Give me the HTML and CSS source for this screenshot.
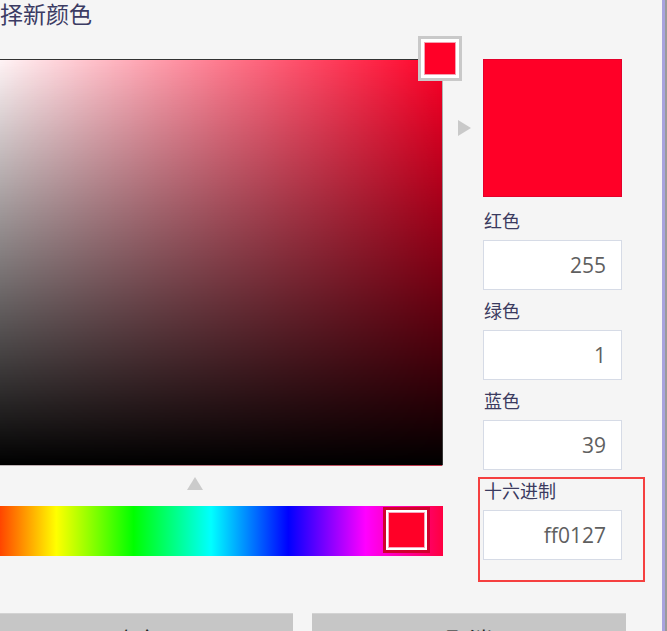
FILE: index.html
```html
<!DOCTYPE html>
<html lang="zh-CN">
<head>
<meta charset="utf-8">
<title>选择新颜色</title>
<link rel="stylesheet" href="styles.css">
</head>
<body>
<div class="dialog">
  <h1 class="title">选择新颜色</h1>
  <div class="main">
    <div class="picker">
      <div class="sv">
        <div class="sv-handle"></div>
      </div>
      <div class="up-arrow"></div>
      <div class="hue">
        <div class="hue-handle"></div>
      </div>
    </div>
    <div class="pointer-col">
      <div class="right-arrow"></div>
    </div>
    <div class="fields">
      <div class="preview"></div>
      <label class="label">红色</label>
      <div class="input">255</div>
      <label class="label">绿色</label>
      <div class="input">1</div>
      <label class="label">蓝色</label>
      <div class="input">39</div>
      <label class="label">十六进制</label>
      <div class="input">ff0127</div>
    </div>
  </div>
  <div class="buttons">
    <div class="btn">确定</div>
    <div class="btn">取消</div>
  </div>
  <div class="highlight"></div>
</div>
</body>
</html>
```

FILE: styles.css
```css
html, body {
  margin: 0;
  padding: 0;
  background: #9a9a9a;
  width: 667px;
  height: 631px;
  overflow: hidden;
}

.dialog {
  position: relative;
  width: 662px;
  height: 631px;
  border-right: 3px solid #a9a3de;
  background: #f5f5f5;
  overflow: hidden;
  font-family: "Noto Sans CJK SC", "Noto Sans", sans-serif;
}

.title {
  margin: 0 0 0 -23px;
  font-size: 23px;
  font-weight: normal;
  line-height: 26px;
  color: #3b3b63;
  white-space: nowrap;
}

.main {
  display: flex;
  align-items: flex-start;
  margin-top: 33px;
}

.picker {
  margin-left: -21px;
  width: 464px;
  display: flex;
  flex-direction: column;
}

.sv {
  position: relative;
  height: 405px;
  border: 1px solid rgba(110, 110, 110, 0.45);
  border-left: none;
  background:
    linear-gradient(to top, #000 0%, rgba(0, 0, 0, 0) 100%),
    linear-gradient(to right, #fff 0%, rgba(255, 255, 255, 0) 100%),
    #ff0027;
}

.sv-handle {
  position: absolute;
  top: -24px;
  right: -20px;
  width: 38px;
  height: 39px;
  border: 3px solid #c9c9c9;
  box-shadow: inset 0 0 0 3px #fff, inset 0 0 0 4px #f4a0b0;
  background: #ff0027;
}

.up-arrow {
  margin: 11px 0 0 208px;
  width: 0;
  height: 0;
  border-left: 8px solid transparent;
  border-right: 8px solid transparent;
  border-bottom: 13px solid #cbcbcb;
}

.hue {
  position: relative;
  margin-top: 16px;
  height: 50px;
  background: linear-gradient(to right,
    #ff0000 0%, #ffff00 16.667%, #00ff00 33.333%, #00ffff 50%,
    #0000ff 66.667%, #ff00ff 83.333%, #ff0040 100%);
}

.hue-handle {
  position: absolute;
  top: 1px;
  left: 404px;
  width: 41px;
  height: 40px;
  border: 3px solid rgba(120, 0, 60, 0.35);
  box-shadow: inset 0 0 0 2px #fff, inset 0 0 0 3px #f7a6bd;
  background: #ff0027;
}

.pointer-col {
  width: 40px;
  padding-top: 61px;
}

.right-arrow {
  margin-left: 15px;
  width: 0;
  height: 0;
  border-top: 8px solid transparent;
  border-bottom: 8px solid transparent;
  border-left: 13px solid #c9c9c9;
}

.fields {
  width: 139px;
  display: flex;
  flex-direction: column;
}

.preview {
  height: 136px;
  border: 1px solid #e3002a;
  background: #ff0027;
  margin-bottom: 3px;
}

.label {
  display: block;
  height: 40px;
  line-height: 40px;
  font-size: 18px;
  color: #3b3b5f;
  white-space: nowrap;
  padding-left: 1px;
}

.input {
  box-sizing: border-box;
  height: 50px;
  border: 1px solid #d6dbe6;
  background: #fff;
  text-align: right;
  padding-right: 15px;
  font-family: "Open Sans", "Noto Sans", sans-serif;
  font-size: 21px;
  line-height: 48px;
  color: #5f5f5f;
}

.buttons {
  display: flex;
  gap: 19px;
  margin: 53px 0 0 -21px;
}

.btn {
  width: 314px;
  height: 50px;
  border-top: 1px solid #d3d3d3;
  background: #c6c6c6;
  text-align: center;
  font-size: 23px;
  line-height: 50px;
  color: #222;
}

.highlight {
  position: absolute;
  left: 478px;
  top: 477px;
  width: 163px;
  height: 101px;
  border: 2px solid #f5403f;
}
```
